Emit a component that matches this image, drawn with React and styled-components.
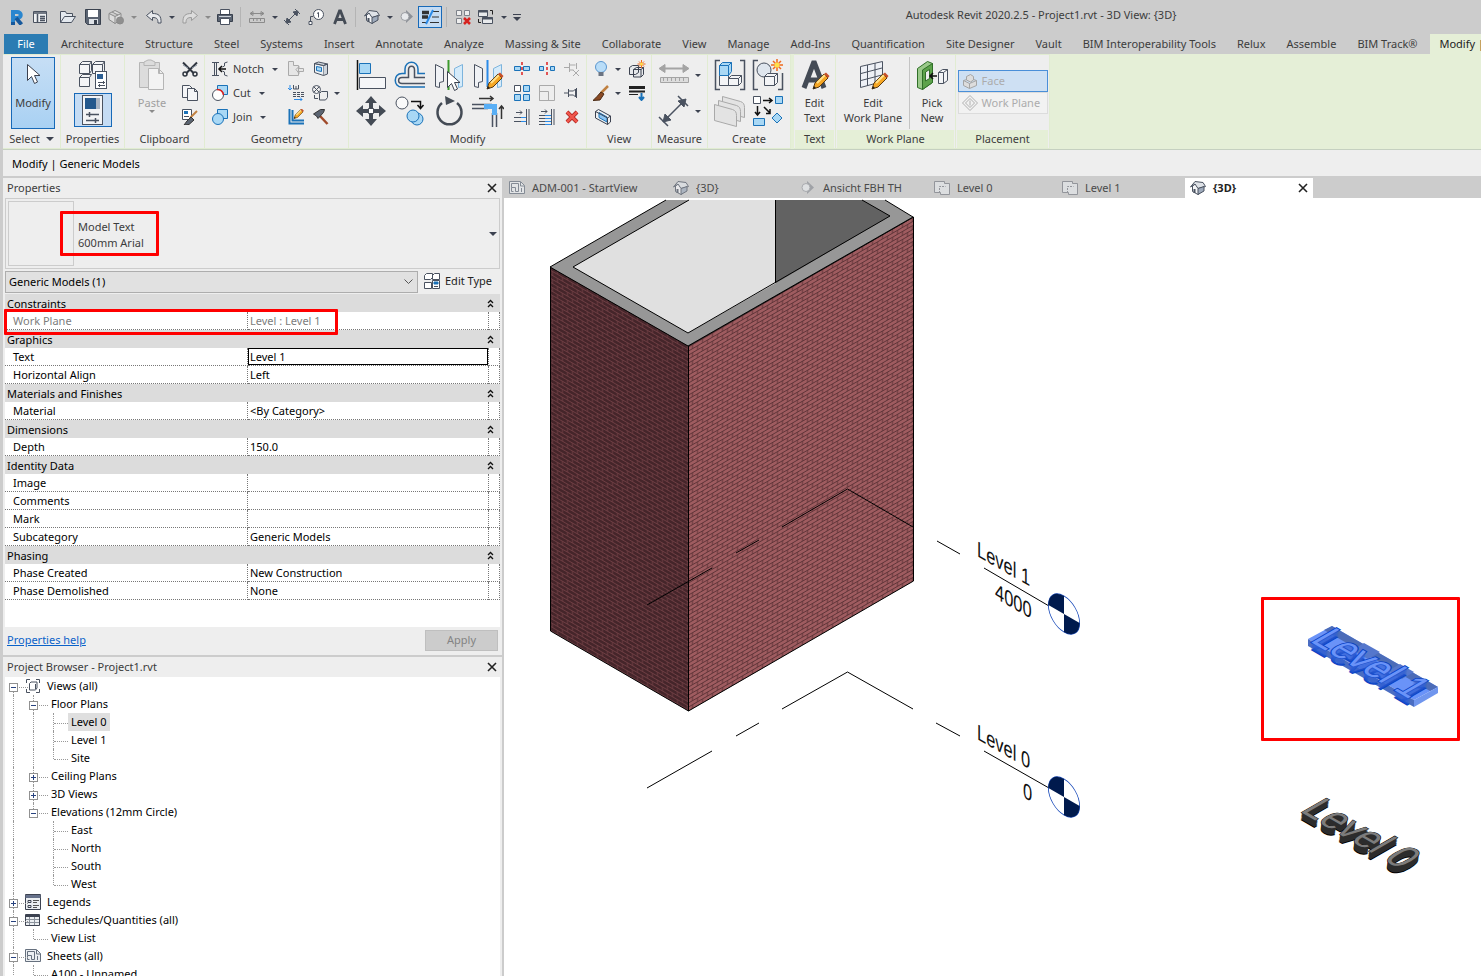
import React from "react";
import styled, { createGlobalStyle, css } from "styled-components";

const GlobalStyle = createGlobalStyle`
  * { box-sizing: border-box; }
  body {
    margin: 0;
    background: #cccccc;
    color: #3c3c3c;
    font: 11px/16px "Noto Sans", "Open Sans", sans-serif;
  }
  button, input, select { font: inherit; color: inherit; margin: 0; }
  svg { display: block; flex: none; }
`;

/* ---------- icons ---------- */

const D = "#4a5260";
const B = "#1b72b8";
const L = "#a9d8f5";

const cubeSet = (
  <g fill="#f4f5f7" stroke={D}>
    <path d="M2.500 5.500l3-3h9l-2 3v9h-10z M2.500 5.500h10M12.500 14.500l2-3v-9" />
    <path d="M15.500 5.500l3-3h9l-2 3v9h-10z M15.500 5.500h10M25.500 14.500l2-3v-9" />
    <path d="M2.500 18.500l3-3h9l-2 3v9h-10z M2.500 18.500h10" />
  </g>
);
const pencil = (x, y) => (
  <g transform={`translate(${x} ${y})`}>
    <path d="M0 16l2-6 9-9 4 4-9 9z" fill="#f5a623" stroke="#5a3a10" />
    <path d="M4 10l8-8" stroke="#ffe08a" strokeWidth="2" />
    <path d="M11 1l4 4 1.500-2-3.500-3.500z" fill="#c8502a" />
    <path d="M0 16l1-3 2 2z" fill="#222" />
  </g>
);
const cursor = (x, y) => (
  <path transform={`translate(${x} ${y})`} d="M.5.5v16l4-4 3 7 3-1.500-3-6.500h5.500z" fill="#fff" stroke="#3c4250" />
);

const art = {
  revit: [16, 16, <g fill="none"><path d="M5 15V3h4c5 0 5 6 0 6H7" stroke="#2a86cf" strokeWidth="4" /><path d="M8 9l5.500 6.500" stroke="#17599c" strokeWidth="4" /><path d="M3 13v3h4v-3" fill="#17599c" /></g>],
  window: [16, 16, <g fill="#eef0f2" stroke={D}><path d="M1.500 2.500h13v11h-13z" /><path d="M2 4h12M5.500 5v8M8 7.500h5M8 9.500h5M8 11.500h5" strokeWidth="1.500" /></g>],
  folder: [16, 16, <path d="M.5 13.500v-11h5l1 2h6v2.500M.5 13.500l4-6h11l-4 6z" fill="#e4e9ef" stroke={D} />],
  save: [16, 16, <g><path d="M.5.500h15v15H2.500l-2-2z" fill="#5b6472" stroke="#39414e" /><path d="M3 1h10v7H3z" fill="#fff" /><path d="M4 10h9v5H4z" fill="#dfe3e8" /><path d="M9 11h3v4H9z" fill="#39414e" /></g>],
  sync: [16, 16, <g fill="#dcdcdc" stroke="#8a8a8a"><path d="M1 4.500l6-3 6 3v6l-6 4-6-4zM1 4.500l6 3 6-3M7 7.500v7M4 3l6 3" /><circle cx="12" cy="11.500" r="3.500" fill="#8f8f8f" /></g>],
  undo: [16, 16, <path d="M.5 6.500l6-5v3c6 0 9 2 8.500 9.500h-3c0-4-1-5.500-5.500-5.500v3z" fill="#e8eaed" stroke={D} />],
  redo: [16, 16, <path d="M15.500 6.500l-6-5v3c-6 0-9 2-8.500 9.500h3c0-4 1-5.500 5.500-5.500v3z" fill="#dcdcdc" stroke="#9b9b9b" />],
  print: [16, 16, <g><path d="M3.500 6V.500h9V6" fill="#fff" stroke={D} /><path d="M.5 5.500h15v7H.5z" fill="#5b6472" stroke="#39414e" /><path d="M3.500 9.500h9v6h-9z" fill="#fff" stroke={D} /><path d="M2 7.500h12" stroke="#ccd2d9" /></g>],
  measureSmall: [16, 16, <g stroke="#8b8b8b" fill="none"><path d="M1 4.500h14M1 4.500l3-2v4zM15 4.500l-3-2v4zM.5 9.500h15v4H.5zM4.500 10v2M8 10v2M11.500 10v2" /></g>],
  dim: [16, 16, <g stroke={D} fill={D}><path d="M3 13L13 3M0 11l5 5M11 0l5 5" /><path d="M2 14l1-5 4 4zM14 2l-5 1 4 4z" /></g>],
  tag: [16, 16, <g stroke={D} fill="#fff"><circle cx="10.500" cy="5.500" r="5" /><path d="M9 4.500l1.500-1v5" fill="none" /><path d="M5 7.500H2.500V12" fill="none" /><path d="M1 12.500h3v3H1z" /></g>],
  bigA: [16, 16, <path d="M2.500 15L7.500 2h1L13.500 15M4.500 10.500h7" fill="none" stroke="#444b55" strokeWidth="2.800" />],
  house: [16, 16, <g stroke={D}><path d="M2.500 6l5-3.500 5.500 2v6l-5 4-5.500-3z" fill="#f4f5f7" /><path d="M.5 7L5 1.500l8 1 2.500 4L8 8.500 5 4z" fill="#dfe3e8" /><path d="M8 8.500v6l6-3.500V6.500z" fill="#9eaabb" /><path d="M4.500 9v4" strokeWidth="2" /></g>],
  section: [16, 16, <g><path d="M7 1l7 6.500-7 6.500z" fill="#8c9097" /><circle cx="6" cy="7.500" r="4" fill="#e7e9ec" stroke="#9a9da2" /></g>],
  thin: [18, 16, <g><path d="M1 3.500h7M1 8h6" stroke="#333" strokeWidth="3.500" /><path d="M1 13.500h5M12 2.500h6M11 8h7M9 13.500h9" stroke="#333" /><path d="M5 15L12 1" stroke="#2b8be8" strokeWidth="2" /></g>],
  closeHidden: [16, 16, <g stroke="#7d828a" fill="#eee"><path d="M1.500 1.500h5v5h-5zM9.500 1.500h5v5h-5zM1.500 9.500h5v5h-5z" /><path d="M9 9l6 6M15 9l-6 6" stroke="#d6231f" strokeWidth="2.500" /></g>],
  switchWin: [17, 16, <g fill="#e8eaec" stroke={D}><path d="M1.500 1.500h9v6h-9zM5.500 8.500h10v6h-10z" /><path d="M1 2.500h10M5 9.500h11" strokeWidth="2" /><path d="M13 1.500h2.500v4M1.500 10v3.500H4" fill="none" stroke="#222" /></g>],
  sheet: [16, 16, <g fill="#eceff2" stroke="#66707e"><path d="M.5 1.500h11l4 4v8H.5z" /><path d="M2.500 3.500h7v8h-3v-4h-4zM2.500 7.500v4h2M11.500 2v4h4M12.500 8v4" fill="none" /></g>],
  floorPlan: [16, 16, <g fill="#e4e6e9" stroke="#7b7f87"><path d="M.5 1.500h10v2h5v11h-9v-2h-6z" /><path d="M5.500 13V6.500h6" fill="none" strokeDasharray="2 1" /></g>],
  views: [16, 16, <g stroke={D} fill="none"><path d="M1.500 5V1.500H5M11 1.500h3.500V5M14.500 11v3.500H11M5 14.500H1.500V11" /><path d="M4.500 5.500l1.500-1.500h6v6l-1.500 2h-6zM10.500 6v5" /></g>],
  legend: [16, 16, <g fill="#eceff2" stroke="#3c4250"><path d="M.5.500h15v15H.5z" /><path d="M.5 2.500h15" strokeWidth="3" stroke="#66718a" /><path d="M3 6.500h3v2H3zM3 11.500h3v2H3z" /><path d="M8 6.500h6M8 8.500h4M8 11.500h6M8 13.500h4" stroke="#555" /></g>],
  schedule: [16, 16, <g fill="#eceff2" stroke="#3c4250"><path d="M.5 2.500h14v11H.5z" /><path d="M1 4h13" strokeWidth="2" /><path d="M1 7.500h13M1 10.500h13M4.500 5v8M9.500 5v8" stroke="#8b929c" /></g>],
  modify: [32, 32, cursor(10, 5)],
  typeProps: [32, 32, <g>{cubeSet}<rect x="18.500" y="12.500" width="11" height="17" fill="#fff" stroke={D} /><rect x="20" y="15" width="6" height="5" fill="#2d5f94" /><path d="M21 23.500h7M21 26.500h7M26.500 22v3M22.500 25v3" stroke={D} /></g>],
  props: [32, 32, <g><rect x="5.500" y="1.500" width="20" height="29" fill="#f3f4f6" stroke={D} /><path d="M8 4h11v11H8z" fill="#24588c" /><path d="M19 4h4v11h-4z" fill="#a9b4c2" /><path d="M9 20.500h13M9 26.500h13" stroke={D} strokeWidth="1.500" /><path d="M12.500 18v5M18.500 24v5" stroke={D} strokeWidth="1.500" /></g>],
  paste: [28, 32, <g fill="#dcdcdc" stroke="#b5b5b5"><path d="M1.500 3.500h20v25h-20z" /><path d="M6 6.500V3l4-2h3l4 2v3.500z" /><path d="M10.500 9.500h10l5 5v16h-15zM20.500 9.500v5h5" fill="#f3f3f3" /></g>],
  cut: [16, 16, <g><path d="M1 1.500l11 11M15 1.500L4 12.500" stroke="#2f3640" strokeWidth="2" /><path d="M1 4l5 3M15 4l-5 3" stroke="#8c96a3" /><circle cx="3" cy="13" r="2" fill="none" stroke="#2f3640" strokeWidth="1.500" /><circle cx="13" cy="13" r="2" fill="none" stroke="#2f3640" strokeWidth="1.500" /></g>],
  copyClip: [16, 16, <g fill="#f4f5f7" stroke={D}><path d="M.5.500h7l3 3v9H.5z" /><path d="M5.500 3.500h7l3 3v9h-10zM12.500 3.500v3h3" /></g>],
  match: [16, 16, <g><path d="M.5.500h9v10h-9z" fill="#fff" stroke={D} /><path d="M2 2h4v3H2z" fill={B} /><path d="M2 7.500h5" stroke={D} /><path d="M15 2l-7 7" stroke="#c08040" strokeWidth="2" /><path d="M9 8l3 3-5 4.500-5 .5 3-4z" fill="#5c6572" stroke="#333" /></g>],
  notch: [16, 16, <g fill="none" stroke={D}><path d="M0 1.500h7M0 14.500h7M2.500 2v12M4.500 2v12M15.500 1l-3 1v3l-2 1M15.500 15l-3-1v-3l-2-1" /><path d="M14 8H7M10 5L7 8l3 3" stroke="#111" strokeWidth="1.500" /></g>],
  cutGeo: [16, 16, <g><path d="M5.500.500h10v9h-10z" fill={L} stroke={B} /><circle cx="6" cy="10" r="5.500" fill="#fff" stroke={D} /><path d="M5 4.500c4 0 6 2 6.500 5.500" fill="none" stroke="#e01f1f" strokeWidth="1.500" /></g>],
  joinGeo: [16, 16, <g fill={L} stroke={B}><path d="M5.500.500h10v9h-10z" /><circle cx="6" cy="10" r="5.500" /></g>],
  cope: [16, 16, <g fill="#e6e6e6" stroke="#aaa"><path d="M.5.500h5v4h5v10H.5zM8 8.500l3-3v2h4.500v3H11v2z" /></g>],
  wallOpen: [16, 16, <g><path d="M1.500 2.500l9 2v10l-9-3z" fill="#eef1f4" stroke={D} /><path d="M1.500 2.500l4-1.500 9 2-4 1.500zM10.500 4.500l4-1.500v10l-4 1.500" fill="#cfd5dc" stroke={D} /><path d="M3.500 5.500l5 1v4l-5-1z" fill={L} stroke={B} /></g>],
  beamJoin: [16, 16, <g fill="none" stroke={D}><path d="M5 7.500h11M5 9.500h11M5 11.500h11" strokeDasharray="3 1" /><path d="M5.500 0v4h5V0M8 1v3" /><path d="M2 0v5M0 3l2 2 2-2M6 14.500h8M12 12.500l2 2-2 2" stroke="#2b8be8" /></g>],
  splitFace: [16, 16, <g fill="#eee" stroke={D}><circle cx="4.500" cy="4.500" r="4" /><path d="M2 2l5 5M7 2L2 7M2.500 10v3.500H6" fill="none" /><path d="M7.500 8.500l2-2h6v6l-2 2.500h-6z" /></g>],
  wallJoin: [16, 16, <g><path d="M1.500 0v14.500H16M4.500 1v10.500H16" fill="none" stroke={B} strokeWidth="2" /><g transform="translate(6 0) scale(.6)">{pencil(0, 0)}</g></g>],
  hammer: [16, 16, <g><path d="M7 7l7.500 8" stroke="#a04a2a" strokeWidth="2.500" /><path d="M.5 5l7-4.500h4l-1 3-5.500 6-1.500-2.500z" fill="#5b6472" stroke="#333" /></g>],
  align: [32, 32, <g><path d="M2.500 1v30" stroke="#111" strokeWidth="1.500" /><path d="M4.500 4.500h11v10h-11z" fill={L} stroke={B} /><path d="M4.500 18.500h26v11h-26z" fill="#f5f6f8" stroke={D} /></g>],
  offset: [32, 32, <g fill="none"><path d="M31 14.500h-7V10c0-9-13-9-13 0v4.500H8c-9 0-9 13.500 0 13.500h23" stroke={B} strokeWidth="1.500" /><path d="M31 18.500H20.500V11c0-5-6-5-6 0v7.500H8c-4.500 0-4.500 6 0 6h23" stroke={D} strokeWidth="1.500" /></g>],
  mirrorPick: [32, 32, <g><path d="M2.500 5.500l8 4v13l-4 1v5l-4-1z" fill="#f0f2f5" stroke={D} /><path d="M29.500 5.500l-8 4v13l4 1v5l4-1z" fill="#d5ebfa" stroke="#7db4dd" /><path d="M15.500 1v30" stroke="#3c9a2d" strokeWidth="2" />{cursor(14, 12)}</g>],
  mirrorDraw: [32, 32, <g><path d="M2.500 5.500l8 4v13l-4 1v5l-4-1z" fill="#f0f2f5" stroke={D} /><path d="M29.500 5.500l-8 4v13l4 1v5l4-1z" fill="#d5ebfa" stroke="#7db4dd" /><path d="M15.500 1v27" stroke="#2b8be8" strokeWidth="2" />{pencil(15, 14)}</g>],
  move: [32, 32, <g fill="#444b55"><path d="M16 1l6 7h-4v5h-4V8h-4zM16 31l-6-7h4v-5h4v5h4zM1 16l7-6v4h5v4H8v4zM31 16l-7 6v-4h-5v-4h5v-4z" /><path d="M13.500 13.500h5v5h-5z" fill="#fff" stroke="#444b55" /></g>],
  copy: [32, 32, <g><circle cx="8" cy="8" r="6" fill="#fafafa" stroke={D} /><path d="M17 6.500h9.500V13M23.500 10l3 3.500 3-3.500" fill="none" stroke="#111" strokeWidth="1.500" /><circle cx="23" cy="24" r="6" fill={L} stroke={B} /><circle cx="19" cy="21" r="6" fill={L} stroke={B} /></g>],
  rotate: [32, 32, <g><path d="M9 8a12 12 0 1 0 15 0" fill="none" stroke="#444b55" strokeWidth="2.500" /><path d="M12 1l10 5-9 4z" fill="#444b55" /></g>],
  trim: [32, 32, <g fill="none"><path d="M0 9.500h20M0 13.500h16M24.500 18v14M20.500 18v14" stroke={D} strokeWidth="1.500" /><path d="M12 11.500h10.500V20" stroke="#58aef5" strokeWidth="5" /><path d="M7 3.500h14M18 1l3 2.500L18 6M29.500 24V11M27 14l2.500-3 2.500 3" stroke="#333" strokeWidth="1.500" /></g>],
  splitEl: [16, 16, <g><path d="M.5 5.500h6v4h-6zM9.500 5.500h6v4h-6z" fill={L} stroke={B} /><path d="M8 1v14" stroke="#d22" strokeDasharray="3 2" strokeWidth="1.500" /></g>],
  splitGap: [16, 16, <g><path d="M.5 5.500h4v4h-4zM11.500 5.500h4v4h-4z" fill={L} stroke={B} /><path d="M8 1v14" stroke="#d22" strokeDasharray="3 2" strokeWidth="1.500" /></g>],
  unpin: [16, 16, <g fill="none" stroke="#aaa"><path d="M0 6.500h5M5.500 2v9M5.500 4h6M5.500 9h4M12.500 2v6M9 9l6 6M15 9l-6 6" /></g>],
  array: [16, 16, <g fill={L} stroke={B}><path d="M.5.500h6v6h-6z" fill="#fff" stroke={D} /><path d="M9.500.500h6v6h-6zM.5 9.500h6v6h-6zM9.500 9.500h6v6h-6z" /></g>],
  scale: [16, 16, <g fill="#eee" stroke="#aaa"><path d="M.5.500h15v15H.5zM.5 6.500h9v9h-9z" /></g>],
  pin: [16, 16, <g fill="#f4f4f4" stroke={D}><path d="M0 8h4M4.500 4v8M4.500 6h5l2-2v8l-2-2h-5M12.500 3v10" /></g>],
  trimOne: [16, 16, <g fill="none" stroke={D}><path d="M2 3.500h6M6 1.500l2 2-2 2M12.500 0v16M15 0v16M0 8.500h7M0 12.500h7" /><path d="M7 8.500h5M7 12.500h5" stroke="#2b8be8" /></g>],
  trimMany: [16, 16, <g fill="none" stroke={D}><path d="M2 2.500h6M6 .5l2 2-2 2M12.500 0v16M15 0v16M0 6.500h6M0 9.500h6M0 12.500h6M0 15.500h6" /><path d="M6 6.500h6M6 9.500h6M6 12.500h6M6 15.500h6" stroke="#2b8be8" /></g>],
  del: [16, 16, <g><path d="M3 3l10 10M13 3L3 13" stroke="#a81f1a" strokeWidth="4" /><path d="M3 3l10 10M13 3L3 13" stroke="#f0564c" strokeWidth="2.500" /></g>],
  bulb: [16, 16, <g><circle cx="8" cy="6" r="5.500" fill="#b9ddf8" stroke="#5a96cf" /><path d="M5.500 11h5v4h-5z" fill="#6b7482" /></g>],
  brush: [16, 16, <g><path d="M15 1L8 8" stroke="#c08040" strokeWidth="2.500" /><path d="M8 7l3 2-4 6-7 .5 4-4z" fill="#8a4a24" stroke="#4a2a14" /></g>],
  displace: [18, 18, <g fill="#e6e8eb" stroke="#3c4250"><path d="M1.500 7.500l3-2h6v7l-3 2h-6zM5.500 9.500l3-2h7v7l-2.500 2.500h-7.500zM5.500 9.500h7.500v7.500M13 9.500l2.500-2" /><path d="M13.500 0v8M9.500 4h8M11 1.500l5 5M16 1.500l-5 5" stroke="#f06a1d" /><circle cx="13.500" cy="4" r="1.500" fill="#ffe14a" stroke="none" /></g>],
  linework: [16, 16, <g><path d="M0 2.500h16" stroke="#222" strokeWidth="3" /><path d="M0 6.500h16" stroke="#222" strokeWidth="2" /><path d="M0 9.500h9" stroke="#222" /><path d="M12.500 8v6M10 12l2.500 3 2.500-3" stroke="#1b72b8" strokeWidth="2" fill="none" /></g>],
  selBox: [16, 16, <g fill="#eef1f4" stroke="#3c4250"><path d="M.5 2.500l3-2 12 6.500v6l-3 2.500L.5 9z" /><path d="M4 3.500l8 4.500v5L4 8.500z" fill="#8cc6f5" stroke={B} /><path d="M.5 2.500l12 6.500v6.500M12.500 9l3-2" fill="none" /></g>],
  measure: [32, 32, <g fill="#a4a4a4" stroke="#a4a4a4"><path d="M2 9.500h28" strokeWidth="2" /><path d="M1 9.500l6-4v8zM31 9.500l-6-4v8z" /><path d="M2.500 18.500h28v5h-28z" fill="#ddd" /><path d="M5.500 19v3M9.500 19v3M13.500 19v3M17.500 19v3M21.500 19v3M25.500 19v3" /></g>],
  dimBig: [32, 32, <g fill={D} stroke={D}><path d="M7 25L26 6M1 22l9 9M20 1l10 10" strokeWidth="1.500" /><path d="M5 27l2-8 6 6zM28 4l-8 2 6 6z" /></g>],
  group: [32, 32, <g fill="#f3f4f6" stroke={D}><path d="M6 1.500H1.500v29H6M26 1.500h4.500v29H26" fill="none" strokeWidth="1.500" /><path d="M5.500 16.500h9v10h-9zM14.500 19.500l3-3h10v7l-3 3h-10zM14.500 19.500h10v7M24.500 19.500l3-3" /><path d="M5.500 6.500l3-3h9v9l-3 4h-9zM5.500 6.500h9v10M14.500 6.500l3-3" fill={L} stroke={B} /></g>],
  similar: [32, 32, <g fill="#f3f4f6" stroke={D}><path d="M6 1.500H1.500v29H6M26 30.500h4.500V14" fill="none" strokeWidth="1.500" /><circle cx="12" cy="11" r="7" fill="#dfe6ee" /><path d="M12.500 17.500l3-3h10v9l-3 3h-10zM12.500 17.500h10v9M22.500 17.500l3-3" /><path d="M25 0v12M19 6h12M21 2l8 8M29 2l-8 8" stroke="#f06a1d" strokeWidth="1.500" /><circle cx="25" cy="6" r="2.500" fill="#ffe14a" stroke="none" /></g>],
  parts: [32, 32, <g fill="#e3e3e3" stroke="#a9a9a9"><path d="M8.500 1.500l18 5c3 1 4 3 4 6v10l-22-6z" /><path d="M4.500 5.500l18 5c3 1 4 3 4 6v10l-22-6z" /><path d="M.5 9.500l18 5c3 1 4 3 4 6v11l-22-6z" /></g>],
  assembly: [32, 32, <g fill="#fff" stroke={D}><path d="M1.500 1.500h7v7h-7z" /><path d="M23.500 1.500h7v7h-7zM1.500 23.500h11v7h-11zM25 18l5 5-5 5-5-5z" fill={L} stroke={B} /><path d="M11 5.500h9M17 3l3 2.500L17 8M5.500 11v9M3 17l2.500 3L8 17M12 12l6 6M18 14v4.500h-4" fill="none" stroke="#111" strokeWidth="1.500" /></g>],
  editText: [32, 32, <g><path d="M5 29L14.500 4h1L25 29M8 21h13" fill="none" stroke="#444b55" strokeWidth="5" />{pencil(14, 14)}</g>],
  editPlane: [32, 32, <g><path d="M3.500 7.500l22-5v20l-22 6zM4 14.500l21-5.500M4 21.500l21-5.500M10.500 6v21M18 4v21" fill="#eef1f6" stroke={D} />{pencil(15, 14)}</g>],
  pick: [32, 32, <g><path d="M1.500 9.500l10-7 5 2v19l-10 7-5-2z" fill="#9ac98a" stroke="#2f6f28" /><path d="M6.500 11l10-6.500v19l-10 7z" fill="#5da34b" stroke="#2f6f28" /><path d="M9.500 13l4-2.500v9l-4 2.500z" fill="#eee" stroke="#2f6f28" /><path d="M21 17h-7M17 14l-3 3 3 3" fill="none" stroke="#111" strokeWidth="1.500" /><path d="M22.500 13.500l4-3h5v11l-4 3h-5zM27.500 13.500h-5M27.500 13.500v11M27.500 13.500l4-3" fill="#f3f4f6" stroke={D} /></g>],
  face: [16, 16, <g fill="#ddd" stroke="#a5a5a5"><path d="M1.500 7.500l7-2 6 2v5l-7 3-6-3zM1.500 7.500l6 3 7-3M7.500 10.500v5" /><path d="M4.500 7V3.500l4-2 3 2V7l-3 2z" /></g>],
  planeSmall: [16, 16, <g fill="none" stroke="#b0b0b0"><path d="M8 .5l7.500 7.500L8 15.500.5 8z" /><path d="M8 3.500L12.500 8 8 12.500 3.500 8zM8 5.500v5" /></g>],
  typeSmall: [16, 16, <g fill="#fff" stroke={D}><path d="M.5 2.500l2-2h6v4l-2 2h-6zM8.500 2.500l2-2h5v6h-7zM.5 9.500h7v6h-7zM8.500 7.500h7v8h-7z" /><path d="M10 9h4v2h-4z" fill={B} stroke={B} /><path d="M10 13.500h4" /></g>],
};

function Icon({ name }) {
  const [w, h, body] = art[name];
  return (
    <svg width={w} height={h} viewBox={`0 0 ${w} ${h}`} fill="none" aria-hidden="true">
      {body}
    </svg>
  );
}

/* ---------- shared controls ---------- */

const Caret = styled.i`
  flex: none;
  width: 0;
  height: 0;
  margin-left: ${(p) => (p.$apart ? 3 : 0)}px;
  border: solid transparent;
  border-width: ${(p) => (p.$large ? "4px 4px 0" : "3px 3px 0")};
  border-top-color: ${(p) => (p.$dim ? "#8a8a8a" : "#3c4250")};
`;

const ToolButton = styled.button`
  display: flex;
  flex: none;
  align-items: center;
  justify-content: center;
  gap: ${(p) => p.$gap || 0}px;
  width: ${(p) => (p.$w ? `${p.$w}px` : "auto")};
  height: ${(p) => p.$h || 24}px;
  padding: 0;
  border: 1px solid ${(p) => (p.$on ? "#1769b8" : "transparent")};
  background: ${(p) => (p.$on ? "#c5dcf4" : "none")};
`;

const CloseButton = styled.button`
  display: flex;
  padding: 0;
  border: 0;
  background: none;
`;

const CloseX = () => (
  <svg width="10" height="10" viewBox="0 0 10 10" aria-hidden="true">
    <path d="M1 1l8 8M9 1L1 9" stroke="#222" strokeWidth="1.600" />
  </svg>
);

/* ---------- frame ---------- */

const Shell = styled.div`
  display: flex;
  flex-direction: column;
  height: 100vh;
  overflow: hidden;
`;

const TitleBar = styled.header`
  display: flex;
  align-items: center;
  flex: none;
  height: 34px;
  padding-left: 4px;
`;

const QuickAccess = styled.div`
  display: flex;
  align-items: center;
  flex: none;
`;

const Divider = styled.span`
  width: 1px;
  height: 20px;
  margin: 0 4px;
  background: #b4b4b4;
`;

const WindowTitle = styled.h1`
  flex: 1;
  margin: 0;
  padding: 0 0 4px 76px;
  font: inherit;
  text-align: center;
  white-space: nowrap;
`;

const TabRow = styled.nav`
  display: flex;
  flex: none;
  height: 20px;
  padding-left: 4px;
  overflow: hidden;
`;

const RibbonTab = styled.button`
  flex: none;
  padding: 0 11px 0 10px;
  border: 0;
  background: none;
  line-height: 20px;
  white-space: nowrap;
  ${(p) => p.$kind === "file" && css`
    width: 44px;
    margin-right: 3px;
    padding: 0;
    background: #2b7cb3;
    color: #fff;
  `}
  ${(p) => p.$kind === "active" && css`
    flex: 1;
    margin-left: 2px;
    padding: 0 0 0 9px;
    background: #e5efd7;
    color: #222;
    text-align: left;
  `}
`;

const Ribbon = styled.section`
  display: flex;
  flex: none;
  height: 96px;
  margin-left: 3px;
  border-bottom: 1px solid #c5d0c0;
  background: #e5efd7;
  overflow: hidden;
`;

const PanelBox = styled.div`
  display: flex;
  flex: none;
  flex-direction: column;
  width: ${(p) => p.$w}px;
  margin-left: ${(p) => (p.$apart ? 3 : 0)}px;
  border: 1px solid #e1ecd2;
  border-left: 0;
  background: #eeeeee;
`;

const PanelBody = styled.div`
  display: flex;
  flex: 1;
  align-items: flex-start;
  justify-content: ${(p) => (p.$pad ? "flex-start" : "center")};
  gap: ${(p) => p.$gap || 0}px;
  padding: 2px 0 0 ${(p) => p.$pad || 0}px;
`;

const PanelLabel = styled.div`
  display: flex;
  align-items: center;
  justify-content: center;
  gap: 6px;
  height: 18px;
  margin: 0 1px;
  background: ${(p) => (p.$green ? "#e5efd7" : "none")};
`;

const Column = styled.div`
  display: flex;
  flex: none;
  flex-direction: column;
  align-items: ${(p) => p.$align || "center"};
  width: ${(p) => (p.$w ? `${p.$w}px` : "auto")};
`;

const PlacementColumn = styled(Column)`
  padding-top: 13px;
`;

const ToolGrid = styled.div`
  display: grid;
  flex: none;
  grid-template-columns: repeat(${(p) => p.$cols}, ${(p) => p.$cell}px);
`;

const BigButton = styled.button`
  display: flex;
  flex: none;
  flex-direction: column;
  align-items: center;
  width: ${(p) => p.$w || 44}px;
  height: 72px;
  padding: 1px 0 0;
  border: 1px solid ${(p) => (p.$on ? "#1769b8" : "transparent")};
  background: ${(p) => (p.$on ? "linear-gradient(#c6def5, #a9d1f3)" : "none")};
  color: ${(p) => (p.$dim ? "#a0a0a0" : "inherit")};
  line-height: 15px;
  white-space: pre-line;
  svg { margin-bottom: 4px; }
`;

const VRule = styled.span`
  align-self: stretch;
  width: 1px;
  margin-bottom: 1px;
  background: #c4c4c4;
`;

const PlacementButton = styled.button`
  display: flex;
  align-items: center;
  gap: 4px;
  width: 90px;
  height: 22px;
  padding: 0 3px;
  border: 1px solid ${(p) => (p.$on ? "#4a8fd8" : "#dcdcdc")};
  background: ${(p) => (p.$on ? "#cee0f3" : "#f2f2f2")};
  color: #acacac;
  white-space: nowrap;
`;

const OptionsBar = styled.div`
  flex: none;
  height: 26px;
  margin-left: 3px;
  padding-left: 9px;
  background: #eeeeee;
  color: #000;
  line-height: 27px;
`;

const Workspace = styled.main`
  display: flex;
  flex: 1;
  gap: 2px;
  min-height: 0;
  padding: 2px 0 0 3px;
`;

const Docks = styled.aside`
  display: flex;
  flex: none;
  flex-direction: column;
  gap: 2px;
  width: 499px;
`;

const Palette = styled.section`
  display: flex;
  flex: ${(p) => (p.$grow ? "1" : "none")};
  flex-direction: column;
  min-height: 0;
  padding: 0 2px;
  background: #eeeeee;
`;

const PaletteHeader = styled.div`
  display: flex;
  align-items: center;
  justify-content: space-between;
  flex: none;
  height: 20px;
  padding: 0 3px 0 2px;
  h2 { margin: 0; font: inherit; }
`;

/* ---------- properties ---------- */

const TypeSelector = styled.button`
  display: flex;
  align-items: center;
  gap: 4px;
  height: 71px;
  padding: 0 2px;
  border: 1px solid #cccccc;
  background: none;
  text-align: left;
  span { flex: 1; padding-top: 2px; white-space: pre-line; }
`;

const TypePreview = styled.i`
  width: 66px;
  height: 65px;
  border: 1px solid #cccccc;
`;

const FilterRow = styled.div`
  display: flex;
  align-items: flex-start;
  gap: 6px;
  height: 25px;
  padding-top: 2px;
`;

const FilterField = styled.div`
  display: flex;
  align-items: center;
  width: 413px;
  height: 22px;
  padding-right: 4px;
  border: 1px solid #adadad;
  background: #e1e1e1;
  color: #000;
  select {
    flex: 1;
    padding: 0 3px;
    border: 0;
    appearance: none;
    background: none;
  }
`;

const EditType = styled.button`
  display: flex;
  align-items: center;
  gap: 5px;
  height: 20px;
  padding: 0;
  border: 0;
  background: none;
  color: #222;
`;

const PropertyTable = styled.table`
  width: 495px;
  border-spacing: 0;
  table-layout: fixed;
  background: #fff;
  color: #000;
  line-height: 17px;
  th, td { height: 18px; padding: 0; font-weight: 400; text-align: left; }
`;

const GroupCell = styled.th`
  background: #dcdcdc;
  div {
    display: flex;
    align-items: center;
    justify-content: space-between;
    height: 18px;
    padding: 0 5px 0 2px;
  }
`;

const dotted = "1px dotted #777";

const NameCell = styled.th`
  && { padding-left: 8px; }
  border-right: ${dotted};
  border-bottom: ${dotted};
  color: ${(p) => (p.$dim ? "#7d7d7d" : "inherit")};
`;

const ValueCell = styled.td`
  border-bottom: ${dotted};
  input {
    display: block;
    width: 100%;
    height: 17px;
    padding: 0 2px;
    border: ${(p) => (p.$active ? "1px solid #000" : "0")};
    padding-left: ${(p) => (p.$active ? 1 : 2)}px;
    background: none;
    outline: 0;
    line-height: 15px;
  }
  input:disabled { color: #7d7d7d; }
`;

const EdgeCell = styled.td`
  border: ${dotted};
  border-top: 0;
`;

const PaletteBlank = styled.div`
  height: 27px;
  background: #fff;
`;

const PaletteFooter = styled.div`
  display: flex;
  align-items: center;
  justify-content: space-between;
  height: 28px;
  padding: 0 2px 2px;
  a { color: #0a62c9; }
`;

const ApplyButton = styled.button`
  width: 73px;
  height: 21px;
  padding: 0;
  border: 1px solid #bfbfbf;
  background: #cccccc;
  color: #838383;
`;

const groups = [
  ["Constraints", [["Work Plane", "Level : Level 1", "dim"]]],
  ["Graphics", [["Text", "Level 1", "active"], ["Horizontal Align", "Left"]]],
  ["Materials and Finishes", [["Material", "<By Category>"]]],
  ["Dimensions", [["Depth", "150.0"]]],
  ["Identity Data", [["Image", ""], ["Comments", ""], ["Mark", ""], ["Subcategory", "Generic Models"]]],
  ["Phasing", [["Phase Created", "New Construction"], ["Phase Demolished", "None"]]],
];

function PropertiesPalette() {
  return (
    <Palette>
      <PaletteHeader>
        <h2>Properties</h2>
        <CloseButton aria-label="Close properties"><CloseX /></CloseButton>
      </PaletteHeader>
      <TypeSelector>
        <TypePreview />
        <span>{"Model Text\n600mm Arial"}</span>
        <Caret $large />
      </TypeSelector>
      <FilterRow>
        <FilterField>
          <select aria-label="Element filter" defaultValue="gm">
            <option value="gm">Generic Models (1)</option>
          </select>
          <svg width="9" height="6" viewBox="0 0 9 6" fill="none"><path d="M.5 .5l4 4 4-4" stroke="#555" /></svg>
        </FilterField>
        <EditType><Icon name="typeSmall" />Edit Type</EditType>
      </FilterRow>
      <PropertyTable>
        <colgroup><col width="243" /><col width="240" /><col width="12" /></colgroup>
        <tbody>
          {groups.map(([title, rows]) => (
            <React.Fragment key={title}>
              <tr>
                <GroupCell colSpan={3}>
                  <div>
                    {title}
                    <svg width="9" height="9" viewBox="0 0 9 9" fill="none">
                      <path d="M2 4l2.500-2.500L7 4M2 8l2.500-2.500L7 8" stroke="#111" strokeWidth="1.300" />
                    </svg>
                  </div>
                </GroupCell>
              </tr>
              {rows.map(([name, value, state]) => (
                <tr key={name}>
                  <NameCell $dim={state === "dim"}>{name}</NameCell>
                  <ValueCell $active={state === "active"}>
                    <input aria-label={name} defaultValue={value} disabled={state === "dim"} />
                  </ValueCell>
                  <EdgeCell />
                </tr>
              ))}
            </React.Fragment>
          ))}
        </tbody>
      </PropertyTable>
      <PaletteBlank />
      <PaletteFooter>
        <a href="#help">Properties help</a>
        <ApplyButton disabled>Apply</ApplyButton>
      </PaletteFooter>
    </Palette>
  );
}

/* ---------- project browser ---------- */

const Tree = styled.ul`
  flex: 1;
  min-height: 0;
  margin: 0;
  padding: 0;
  overflow: hidden;
  background: #fff;
  color: #000;
  list-style: none;
`;

const TreeRow = styled.li`
  display: flex;
  align-items: center;
  height: 18px;
  white-space: nowrap;
`;

const Guide = styled.span`
  position: relative;
  display: flex;
  align-items: center;
  flex: none;
  width: 20px;
  height: 18px;
  padding-left: 4px;
  &::before {
    content: "";
    position: absolute;
    left: 8px;
    top: ${(p) => (p.$v === "down" ? 9 : 0)}px;
    height: ${(p) => ({ full: 18, up: 10, down: 9 }[p.$v] || 0)}px;
    border-left: 1px dotted #999;
  }
  &::after {
    content: "";
    position: absolute;
    left: 9px;
    top: 10px;
    width: ${(p) => (p.$h ? 14 : 0)}px;
    border-top: 1px dotted #999;
  }
`;

const Toggle = styled.button`
  position: relative;
  z-index: 1;
  display: flex;
  width: 9px;
  height: 9px;
  margin-top: 2px;
  padding: 0;
  border: 1px solid #919191;
  background: #fff;
`;

const NodeLabel = styled.span`
  margin-left: 3px;
  padding: 0 3px;
  background: ${(p) => (p.$selected ? "#dfdfdf" : "none")};
  line-height: 18px;
`;

/* Each entry: guide cells, label, optional icon, selected.
   Cells: | line, + expand, - collapse, R root collapse, _ last collapse, t tee, e end, space blank */
const nodes = [
  ["R", "Views (all)", "views"],
  ["|-", "Floor Plans"],
  ["||t", "Level 0", null, true],
  ["||t", "Level 1"],
  ["||e", "Site"],
  ["|+", "Ceiling Plans"],
  ["|+", "3D Views"],
  ["|_", "Elevations (12mm Circle)"],
  ["| t", "East"],
  ["| t", "North"],
  ["| t", "South"],
  ["| e", "West"],
  ["+", "Legends", "legend"],
  ["-", "Schedules/Quantities (all)", "schedule"],
  ["|e", "View List"],
  ["-", "Sheets (all)", "sheet"],
  ["|t", "A100 - Unnamed"],
];
const cellLook = { "|": ["full", 0], "-": ["full", 1], "+": ["full", 1], R: ["down", 1], _: ["up", 1], t: ["full", 1], e: ["up", 1], " ": [null, 0] };

function ProjectBrowser() {
  return (
    <Palette $grow>
      <PaletteHeader>
        <h2>Project Browser - Project1.rvt</h2>
        <CloseButton aria-label="Close project browser"><CloseX /></CloseButton>
      </PaletteHeader>
      <Tree>
        {nodes.map(([cells, label, icon, selected]) => (
          <TreeRow key={cells + label}>
            {cells.split("").map((c, i) => (
              <Guide key={i} $v={cellLook[c][0]} $h={cellLook[c][1]}>
                {"-+R_".includes(c) && (
                  <Toggle aria-label={c === "+" ? "Expand" : "Collapse"}>
                    <svg width="7" height="7" viewBox="0 0 7 7">
                      <path d={c === "+" ? "M1 3.500h5M3.500 1v5" : "M1 3.500h5"} stroke="#27427f" />
                    </svg>
                  </Toggle>
                )}
              </Guide>
            ))}
            {icon && <Icon name={icon} />}
            <NodeLabel $selected={selected}>{label}</NodeLabel>
          </TreeRow>
        ))}
      </Tree>
    </Palette>
  );
}

/* ---------- view area ---------- */

const ViewArea = styled.section`
  display: flex;
  flex: 1;
  flex-direction: column;
  min-width: 0;
`;

const ViewTabs = styled.div`
  display: flex;
  flex: none;
  height: 20px;
`;

const ViewTab = styled.div`
  display: flex;
  align-items: center;
  justify-content: space-between;
  flex: none;
  width: ${(p) => p.$w || 128}px;
  padding: 0 5px;
  color: ${(p) => (p.$active ? "#222" : "#4a4a4a")};
  font-weight: ${(p) => (p.$active ? 700 : 400)};
  background: ${(p) => (p.$active ? "#fff" : "none")};
  white-space: nowrap;
`;

const ViewTabButton = styled.button`
  display: flex;
  align-items: center;
  gap: 7px;
  padding: 0;
  border: 0;
  background: none;
  svg { opacity: ${(p) => (p.$active ? 1 : 0.7)}; }
`;

const Canvas = styled.div`
  position: relative;
  flex: 1;
  min-height: 0;
  background: #fff;
  overflow: hidden;
`;

const Scene = styled.svg`
  width: 100%;
  height: 100%;
`;

const shadowStack = (color) => [1, 2, 3, 4, 5, 6, 7].map((n) => `${n}px ${n}px 0 ${color(n)}`).join(", ");

/* Extruded text lying on the ground plane; its anchor is the start of the baseline. */
const ModelText = styled.span`
  position: absolute;
  left: ${(p) => p.$x}px;
  top: ${(p) => p.$y - 30}px;
  font: 36px/36px "Liberation Sans", Arial, sans-serif;
  white-space: nowrap;
  transform-origin: 0 30px;
  transform: rotate(30deg) skewX(-30deg);
  paint-order: stroke fill;
  ${(p) => p.$blue
    ? css`
      color: #6a93f8;
      -webkit-text-stroke: 2px #0a43c4;
      text-shadow: ${shadowStack((n) => (n === 7 ? "#0a43c4" : "rgba(48, 96, 214, 0.4)"))};
    `
    : css`
      color: #7c7c7c;
      -webkit-text-stroke: 1px #000;
      text-shadow: ${shadowStack((n) => (n === 7 ? "#000" : "#2c2c2c"))};
    `}
`;

const Marker = styled.span`
  position: absolute;
  z-index: 2;
  left: ${(p) => p.$x}px;
  top: ${(p) => p.$y}px;
  width: ${(p) => p.$w}px;
  height: ${(p) => p.$h}px;
  border: 3px solid #f00;
  border-radius: 1px;
  pointer-events: none;
`;

function LevelHead({ x, y }) {
  return (
    <g transform={`translate(${x} ${y}) matrix(.866 .5 0 1 0 0)`}>
      <circle r="18" fill="#fff" stroke="#1446b8" />
      <path d="M0 0H-18A18 18 0 0 1 0 -18zM0 0H18A18 18 0 0 1 0 18z" fill="#001a4d" />
    </g>
  );
}

function LevelText({ x, y, children }) {
  return (
    <text transform={`translate(${x} ${y}) rotate(30) skewX(30)`} fontFamily="Liberation Sans, Arial, sans-serif" fontSize="19" fill="#111">
      {children}
    </text>
  );
}

function Brick({ id, angle, base, joint }) {
  return (
    <pattern id={id} width="10" height="8" patternUnits="userSpaceOnUse" patternTransform={`skewY(${angle})`}>
      <rect width="10" height="8" fill={base} />
      <path d="M0 .5h10M0 4.500h10M2.500 0v4M7.500 4v4" stroke={joint} />
    </pattern>
  );
}

function ModelScene() {
  return (
    <Scene>
      <defs>
        <Brick id="brickLight" angle={-30} base="#9f5c60" joint="#5f3438" />
        <Brick id="brickDark" angle={30} base="#45252a" joint="#6e3e43" />
      </defs>
      <g transform="translate(-504 -198)" fill="none">
        <g stroke="#000" strokeLinejoin="round">
          <path d="M550.500 267L688.500 346V711L550.500 631z" fill="url(#brickDark)" />
          <path d="M913.500 217L688.500 346V711L913.500 581z" fill="url(#brickLight)" />
        </g>
        <path d="M666 200L550 267 688 346 913 217 885 200z" fill="#979797" />
        <path d="M689 200L573 267 688 333 776 283V200z" fill="#e0e0e0" />
        <path d="M776 200V283L890 216 862 200z" fill="#626262" />
        <path d="M666 200L550 267 688 346 913 217 885 200M689 200L573 267 688 333 890 216 862 200M775.500 200V283" stroke="#000" />
        <path d="M782 527L847.500 489 913 527M759 540L736 553M712 568L647 605M937 541L960 554M984 568L1049 606" stroke="#000" />
        <path d="M782 709L847.500 672 913 709M759 723L736 736M712 751L647 788M936 723L960 736M984 751L1049 788" stroke="#000" />
        <LevelText x={977} y={556}>Level 1</LevelText>
        <LevelText x={995} y={598}>4000</LevelText>
        <LevelText x={977} y={739}>Level 0</LevelText>
        <LevelText x={1023} y={797}>0</LevelText>
        <LevelHead x={1064} y={614} />
        <LevelHead x={1064} y={797} />
        <path d="M1308 639L1332 626 1438 687 1414 700z" fill="#6a93f8" />
        <path d="M1332 626L1438 687 1430 691 1324 630z" fill="#4c6cb8" />
        <path d="M1352 650l12-7 16 9-12 7zM1388 671l12-7 14 8-12 7z" fill="#5577cc" />
        <path d="M1308 639L1414 700V707L1308 646z" fill="#4a6dc2" />
        <path d="M1414 700L1438 687V693L1414 707z" fill="#7096ee" />
      </g>
    </Scene>
  );
}

const ribbonTabs = ["Architecture", "Structure", "Steel", "Systems", "Insert", "Annotate", "Analyze", "Massing & Site", "Collaborate", "View", "Manage", "Add-Ins", "Quantification", "Site Designer", "Vault", "BIM Interoperability Tools", "Relux", "Assemble", "BIM Track®"];

/* name, cell width, caret ("c" normal, "d" dimmed), pressed */
const quick = [
  ["revit", 24], ["window", 24], ["folder", 32], ["save", 18], ["sync", 40, "d"], ["undo", 36, "c"], ["redo", 36, "d"], ["print", 22], "|",
  ["measureSmall", 36, "c"], ["dim", 22], ["tag", 26], ["bigA", 22], "|",
  ["house", 36, "c"], ["section", 22], ["thin", 24, null, true], "|",
  ["closeHidden", 24], ["switchWin", 34, "c"],
];

const viewTabs = [
  ["sheet", "ADM-001 - StartView", 164],
  ["house", "{3D}", 127],
  ["section", "Ansicht FBH TH", 134],
  ["floorPlan", "Level 0", 128],
  ["floorPlan", "Level 1", 128],
];

function Panel({ label, w, gap, pad, green, apart, caret, children }) {
  return (
    <PanelBox $w={w} $apart={apart}>
      <PanelBody $gap={gap} $pad={pad}>{children}</PanelBody>
      <PanelLabel $green={green}>{label}{caret && <Caret $large />}</PanelLabel>
    </PanelBox>
  );
}

const tools = (names, w, h) => names.map((n) => (
  <ToolButton key={n} $w={w} $h={h} aria-label={n}><Icon name={n} /></ToolButton>
));

export default function App() {
  return (
    <Shell>
      <GlobalStyle />
      <TitleBar>
        <QuickAccess>
          {quick.map((q, i) => q === "|" ? <Divider key={i} /> : (
            <ToolButton key={q[0]} $w={q[1]} $h={22} $gap={7} $on={q[3]} aria-label={q[0]}>
              <Icon name={q[0]} />
              {q[2] && <Caret $dim={q[2] === "d"} />}
            </ToolButton>
          ))}
          <ToolButton $w={16} $h={22} aria-label="Customize">
            <svg width="8" height="8" viewBox="0 0 8 8"><path d="M0 1.500h8" stroke="#3c4250" /><path d="M0 4h8L4 8z" fill="#3c4250" /></svg>
          </ToolButton>
        </QuickAccess>
        <WindowTitle>Autodesk Revit 2020.2.5 - Project1.rvt - 3D View: {"{3D}"}</WindowTitle>
      </TitleBar>

      <TabRow>
        <RibbonTab $kind="file">File</RibbonTab>
        {ribbonTabs.map((t) => <RibbonTab key={t}>{t}</RibbonTab>)}
        <RibbonTab $kind="active">Modify |</RibbonTab>
      </TabRow>

      <Ribbon>
        <Panel label="Select" w={58} pad={8} caret>
          <BigButton $on><Icon name="modify" />Modify</BigButton>
        </Panel>
        <Panel label="Properties" w={64}>
          <Column>
            <ToolButton $w={38} $h={36} aria-label="Type Properties"><Icon name="typeProps" /></ToolButton>
            <ToolButton $w={38} $h={34} $on aria-label="Properties"><Icon name="props" /></ToolButton>
          </Column>
        </Panel>
        <Panel label="Clipboard" w={80} pad={5} gap={4}>
          <BigButton $dim><Icon name="paste" />Paste<Caret $dim /></BigButton>
          <Column>{tools(["cut", "copyClip", "match"], 24)}</Column>
        </Panel>
        <Panel label="Geometry" w={144} pad={6} gap={1}>
          <Column $align="flex-start" $w={72}>
            <ToolButton $gap={5}><Icon name="notch" />Notch<Caret $apart /></ToolButton>
            <ToolButton $gap={5}><Icon name="cutGeo" />Cut<Caret $apart /></ToolButton>
            <ToolButton $gap={5}><Icon name="joinGeo" />Join<Caret $apart /></ToolButton>
          </Column>
          <Column>{tools(["cope", "beamJoin", "wallJoin"], 24)}</Column>
          <Column $align="flex-start">
            <ToolButton $w={24} aria-label="Wall opening"><Icon name="wallOpen" /></ToolButton>
            <ToolButton $w={34} $gap={6} aria-label="Split face"><Icon name="splitFace" /><Caret /></ToolButton>
            <ToolButton $w={24} aria-label="Demolish"><Icon name="hammer" /></ToolButton>
          </Column>
        </Panel>
        <Panel label="Modify" w={238} pad={4} gap={1}>
          <ToolGrid $cols={4} $cell={39}>
            {tools(["align", "offset", "mirrorPick", "mirrorDraw", "move", "copy", "rotate", "trim"], 36, 36)}
          </ToolGrid>
          <ToolGrid $cols={3} $cell={25}>
            {tools(["splitEl", "splitGap", "unpin", "array", "scale", "pin", "trimOne", "trimMany", "del"], 24)}
          </ToolGrid>
        </Panel>
        <Panel label="View" w={65} pad={4} gap={2}>
          <Column $align="flex-start">
            <ToolButton $w={32} $gap={6} aria-label="Hide"><Icon name="bulb" /><Caret /></ToolButton>
            <ToolButton $w={32} $gap={6} aria-label="Override"><Icon name="brush" /><Caret /></ToolButton>
            <ToolButton $w={24} aria-label="Selection box"><Icon name="selBox" /></ToolButton>
          </Column>
          <Column>{tools(["displace", "linework"], 24)}</Column>
        </Panel>
        <Panel label="Measure" w={56}>
          <Column>
            <ToolButton $w={50} $h={36} $gap={5} aria-label="Measure"><Icon name="measure" /><Caret /></ToolButton>
            <ToolButton $w={50} $h={36} $gap={5} aria-label="Dimension"><Icon name="dimBig" /><Caret /></ToolButton>
          </Column>
        </Panel>
        <Panel label="Create" w={83}>
          <ToolGrid $cols={2} $cell={38}>{tools(["group", "similar", "parts", "assembly"], 38, 36)}</ToolGrid>
        </Panel>
        <Panel label="Text" w={42} green apart>
          <BigButton $w={38}><Icon name="editText" />{"Edit\nText"}</BigButton>
        </Panel>
        <Panel label="Work Plane" w={120} green>
          <BigButton $w={72}><Icon name="editPlane" />{"Edit\nWork Plane"}</BigButton>
          <VRule />
          <BigButton><Icon name="pick" />{"Pick\nNew"}</BigButton>
        </Panel>
        <Panel label="Placement" w={94} green>
          <PlacementColumn>
            <PlacementButton $on><Icon name="face" />Face</PlacementButton>
            <PlacementButton><Icon name="planeSmall" />Work Plane</PlacementButton>
          </PlacementColumn>
        </Panel>
      </Ribbon>

      <OptionsBar>Modify | Generic Models</OptionsBar>

      <Workspace>
        <Docks>
          <PropertiesPalette />
          <ProjectBrowser />
        </Docks>
        <ViewArea>
          <ViewTabs>
            {viewTabs.map(([icon, label, w]) => (
              <ViewTab key={label} $w={w}>
                <ViewTabButton><Icon name={icon} />{label}</ViewTabButton>
              </ViewTab>
            ))}
            <ViewTab $active>
              <ViewTabButton $active><Icon name="house" />{"{3D}"}</ViewTabButton>
              <CloseButton aria-label="Close view"><CloseX /></CloseButton>
            </ViewTab>
          </ViewTabs>
          <Canvas>
            <ModelScene />
            <ModelText $blue $x={805} $y={443}>Level 1</ModelText>
            <ModelText $x={795} $y={613}>Level 0</ModelText>
            <Marker $x={757} $y={399} $w={199} $h={144} />
          </Canvas>
        </ViewArea>
      </Workspace>
      <Marker $x={60} $y={211} $w={99} $h={45} />
      <Marker $x={4} $y={309} $w={334} $h={26} />
    </Shell>
  );
}
